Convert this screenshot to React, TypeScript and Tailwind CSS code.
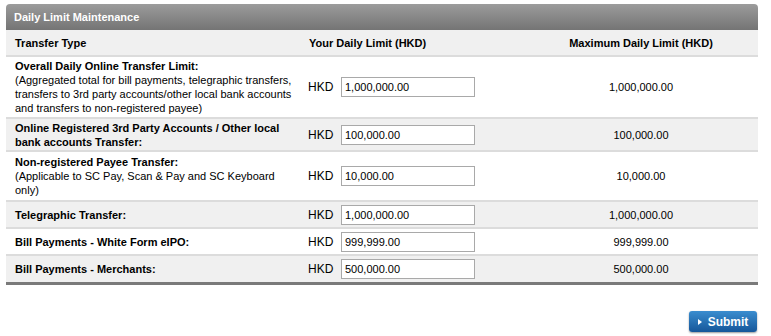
import React from "react";

interface LimitRow {
  title: string;
  note?: string;
  value: string;
  max: string;
  height: string;
  shaded: boolean;
}

const rows: LimitRow[] = [
  {
    title: "Overall Daily Online Transfer Limit:",
    note: "(Aggregated total for bill payments, telegraphic transfers, transfers to 3rd party accounts/other local bank accounts and transfers to non-registered payee)",
    value: "1,000,000.00",
    max: "1,000,000.00",
    height: "h-[62px]",
    shaded: false,
  },
  {
    title: "Online Registered 3rd Party Accounts / Other local bank accounts Transfer:",
    value: "100,000.00",
    max: "100,000.00",
    height: "h-[33px]",
    shaded: true,
  },
  {
    title: "Non-registered Payee Transfer:",
    note: "(Applicable to SC Pay, Scan & Pay and SC Keyboard only)",
    value: "10,000.00",
    max: "10,000.00",
    height: "h-[50px]",
    shaded: false,
  },
  {
    title: "Telegraphic Transfer:",
    value: "1,000,000.00",
    max: "1,000,000.00",
    height: "h-[27px]",
    shaded: true,
  },
  {
    title: "Bill Payments - White Form eIPO:",
    value: "999,999.00",
    max: "999,999.00",
    height: "h-[27px]",
    shaded: false,
  },
  {
    title: "Bill Payments - Merchants:",
    value: "500,000.00",
    max: "500,000.00",
    height: "h-[28px]",
    shaded: true,
  },
];

export default function App() {
  return (
    <div
      className="w-[771px] h-[336px] bg-white text-[11px] leading-[14px] text-black pt-[4px] pl-[6px]"
      style={{ fontFamily: '"Liberation Sans", Arial, sans-serif' }}
    >
      <div className="w-[752px]">
        {/* Title bar */}
        <div className="h-[26px] rounded-t-[4px] bg-gradient-to-b from-[#9c9c9c] to-[#747474] flex items-center px-[8px] font-bold text-white">
          Daily Limit Maintenance
        </div>

        {/* Column headings */}
        <div className="grid grid-cols-[294px_224px_234px] h-[25px] items-center bg-[#f0f0f0] font-bold">
          <div className="pl-[9px]">Transfer Type</div>
          <div className="pl-[9px]">Your Daily Limit (HKD)</div>
          <div className="text-center">Maximum Daily Limit (HKD)</div>
        </div>

        {/* Rows */}
        {rows.map((row, i) => (
          <div
            key={i}
            className={`grid grid-cols-[294px_224px_234px] items-center border-t-2 border-[#dcdcdc] ${row.height} ${
              row.shaded ? "bg-[#f0f0f0]" : "bg-white"
            }`}
          >
            <div className="pl-[9px] pr-[4px]">
              <div className="font-bold">{row.title}</div>
              {row.note && <div>{row.note}</div>}
            </div>
            <div className="flex items-center pl-[8px]">
              <span className="w-[33px] text-[12px]">HKD</span>
              <input
                readOnly
                value={row.value}
                className="w-[134px] h-[20px] border border-[#a9a9a9] bg-white px-[3px] text-[11px] outline-none"
                style={{ fontFamily: '"Liberation Sans", Arial, sans-serif' }}
              />
            </div>
            <div className="text-center">{row.max}</div>
          </div>
        ))}
        <div className="h-[3px] bg-[#7a7a7a]" />

        {/* Submit */}
        <div className="flex justify-end mt-[26px] pr-[1px]">
          <button className="flex items-center gap-[6px] h-[21px] w-[68px] justify-center rounded-[3px] bg-gradient-to-b from-[#3a8dcf] to-[#16579a] shadow-[0_1px_2px_rgba(0,0,0,0.4)] text-white font-bold text-[12px]">
            <svg width="4" height="6" viewBox="0 0 4 6">
              <path d="M0 0 L4 3 L0 6 Z" fill="#ffffff" />
            </svg>
            Submit
          </button>
        </div>
      </div>
    </div>
  );
}
